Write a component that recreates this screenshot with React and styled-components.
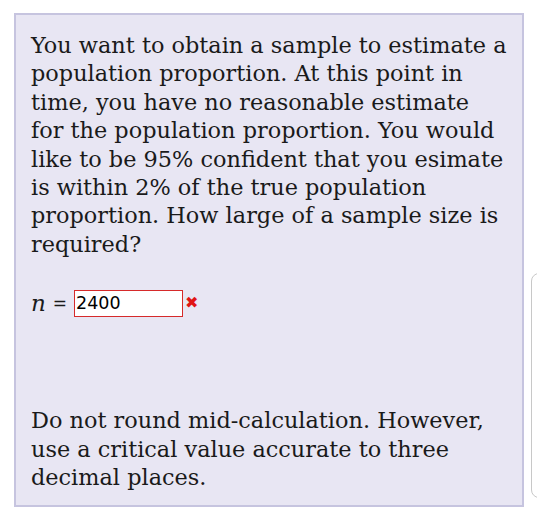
import styled, { createGlobalStyle } from 'styled-components';

const Global = createGlobalStyle`
  html, body {
    margin: 0;
    padding: 0;
    background: #ffffff;
  }
`;

const Page = styled.div`
  display: flex;
  align-items: flex-start;
  gap: 7px;
  padding: 13px 0 0 14px;
  width: 537px;
  height: 527px;
  box-sizing: border-box;
  overflow: hidden;
`;

const Card = styled.div`
  flex: 0 0 510px;
  height: 494px;
  box-sizing: border-box;
  background: #e8e6f3;
  border: 2px solid #c6c4df;
  padding: 16px 15px;
  font-family: "DejaVu Serif", "Liberation Serif", serif;
  font-size: 22.4px;
  line-height: 28.4px;
  color: #1a1a1a;
`;

const Para = styled.p`
  margin: 0;
`;

const AnswerRow = styled.div`
  display: flex;
  align-items: center;
  margin: 31px 0 89px;
  height: 28px;
`;

const Var = styled.span`
  font-family: "DejaVu Serif", serif;
  font-style: italic;
  font-size: 23px;
  margin-right: 7px;
`;

const Equals = styled.span`
  font-family: "DejaVu Sans", sans-serif;
  font-size: 17px;
  margin-right: 7px;
`;

const Field = styled.input`
  width: 109px;
  height: 27px;
  box-sizing: border-box;
  border: 1px solid #d62a2a;
  background: #ffffff;
  padding: 0 1px;
  font-family: "DejaVu Sans", sans-serif;
  font-size: 17.5px;
  color: #000;
  outline: none;
`;

const Cross = styled.span`
  margin-left: 2px;
  color: #e01515;
  font-family: "DejaVu Sans", sans-serif;
  font-size: 16px;
  line-height: 1;
`;

const SidePanel = styled.div`
  flex: 0 0 40px;
  margin-top: 260px;
  height: 223px;
  background: #ffffff;
  border: 1px solid #c8c8c8;
  border-radius: 8px;
`;

export default function App() {
  return (
    <>
      <Global />
      <Page>
        <Card>
          <Para>
            You want to obtain a sample to estimate a population proportion. At this point in
            time, you have no reasonable estimate for the population proportion. You would like
            to be 95% confident that you esimate is within 2% of the true population proportion.
            How large of a sample size is required?
          </Para>
          <AnswerRow>
            <Var>n</Var>
            <Equals>=</Equals>
            <Field defaultValue="2400" />
            <Cross>✖</Cross>
          </AnswerRow>
          <Para>
            Do not round mid-calculation. However, use a critical value accurate to three
            decimal places.
          </Para>
        </Card>
        <SidePanel />
      </Page>
    </>
  );
}
